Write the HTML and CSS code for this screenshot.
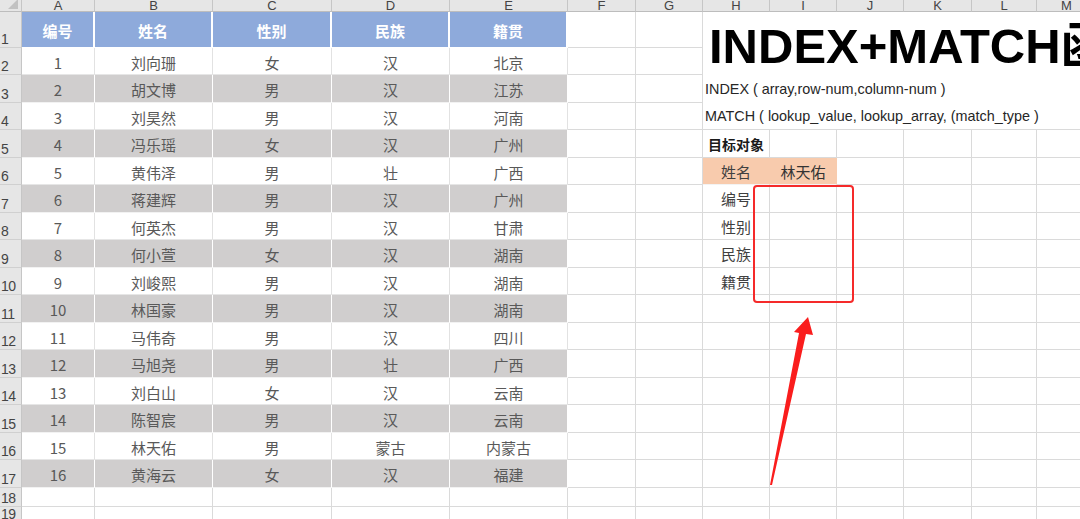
FILE: index.html
```html
<!DOCTYPE html>
<html lang="zh-CN">
<head>
    <meta charset="UTF-8">
    <title>INDEX+MATCH</title>
    <link rel="stylesheet" href="styles.css">
</head>
<body>
<div class="sheet">
    <!-- column headers -->
    <div class="corner"><span class="tri"></span></div>
    <div class="ch">A</div><div class="ch">B</div><div class="ch">C</div><div class="ch">D</div><div class="ch">E</div><div class="ch">F</div><div class="ch">G</div>
    <div class="ch">H</div><div class="ch">I</div><div class="ch">J</div><div class="ch">K</div><div class="ch">L</div><div class="ch">M</div>

    <!-- row 1 -->
    <div class="rn">1</div>
    <div class="hd">编号</div><div class="hd">姓名</div><div class="hd">性别</div><div class="hd">民族</div><div class="hd">籍贯</div>
    <div class="c"></div><div class="c"></div>
    <div class="title">INDEX+MATCH函数</div>

    <!-- row 2 -->
    <div class="rn">2</div>
    <div class="d">1</div><div class="d">刘向珊</div><div class="d">女</div><div class="d">汉</div><div class="d">北京</div>
    <div class="c"></div><div class="c"></div>

    <!-- row 3 -->
    <div class="rn">3</div>
    <div class="d g">2</div><div class="d g">胡文博</div><div class="d g">男</div><div class="d g">汉</div><div class="d g">江苏</div>
    <div class="c"></div><div class="c"></div>
    <div class="fx">INDEX ( array,row-num,column-num )</div>

    <!-- row 4 -->
    <div class="rn">4</div>
    <div class="d">3</div><div class="d">刘昊然</div><div class="d">男</div><div class="d">汉</div><div class="d">河南</div>
    <div class="c"></div><div class="c"></div>
    <div class="fx last">MATCH ( lookup_value, lookup_array, (match_type )</div>

    <!-- row 5 -->
    <div class="rn">5</div>
    <div class="d g">4</div><div class="d g">冯乐瑶</div><div class="d g">女</div><div class="d g">汉</div><div class="d g">广州</div>
    <div class="c"></div><div class="c"></div>
    <div class="c target">目标对象</div><div class="c"></div><div class="c"></div><div class="c"></div><div class="c"></div><div class="c"></div>

    <!-- row 6 -->
    <div class="rn">6</div>
    <div class="d">5</div><div class="d">黄伟泽</div><div class="d">男</div><div class="d">壮</div><div class="d">广西</div>
    <div class="c"></div><div class="c"></div>
    <div class="c lbl pe">姓名</div><div class="c val pe">林天佑</div><div class="c"></div><div class="c"></div><div class="c"></div><div class="c"></div>

    <!-- row 7 -->
    <div class="rn">7</div>
    <div class="d g">6</div><div class="d g">蒋建辉</div><div class="d g">男</div><div class="d g">汉</div><div class="d g">广州</div>
    <div class="c"></div><div class="c"></div>
    <div class="c lbl">编号</div><div class="c"></div><div class="c"></div><div class="c"></div><div class="c"></div><div class="c"></div>

    <!-- row 8 -->
    <div class="rn">8</div>
    <div class="d">7</div><div class="d">何英杰</div><div class="d">男</div><div class="d">汉</div><div class="d">甘肃</div>
    <div class="c"></div><div class="c"></div>
    <div class="c lbl">性别</div><div class="c"></div><div class="c"></div><div class="c"></div><div class="c"></div><div class="c"></div>

    <!-- row 9 -->
    <div class="rn">9</div>
    <div class="d g">8</div><div class="d g">何小萱</div><div class="d g">女</div><div class="d g">汉</div><div class="d g">湖南</div>
    <div class="c"></div><div class="c"></div>
    <div class="c lbl">民族</div><div class="c"></div><div class="c"></div><div class="c"></div><div class="c"></div><div class="c"></div>

    <!-- row 10 -->
    <div class="rn">10</div>
    <div class="d">9</div><div class="d">刘峻熙</div><div class="d">男</div><div class="d">汉</div><div class="d">湖南</div>
    <div class="c"></div><div class="c"></div>
    <div class="c lbl">籍贯</div><div class="c"></div><div class="c"></div><div class="c"></div><div class="c"></div><div class="c"></div>

    <!-- row 11 -->
    <div class="rn">11</div>
    <div class="d g">10</div><div class="d g">林国豪</div><div class="d g">男</div><div class="d g">汉</div><div class="d g">湖南</div>
    <div class="c"></div><div class="c"></div><div class="c"></div><div class="c"></div><div class="c"></div><div class="c"></div><div class="c"></div><div class="c"></div>

    <!-- row 12 -->
    <div class="rn">12</div>
    <div class="d">11</div><div class="d">马伟奇</div><div class="d">男</div><div class="d">汉</div><div class="d">四川</div>
    <div class="c"></div><div class="c"></div><div class="c"></div><div class="c"></div><div class="c"></div><div class="c"></div><div class="c"></div><div class="c"></div>

    <!-- row 13 -->
    <div class="rn">13</div>
    <div class="d g">12</div><div class="d g">马旭尧</div><div class="d g">男</div><div class="d g">壮</div><div class="d g">广西</div>
    <div class="c"></div><div class="c"></div><div class="c"></div><div class="c"></div><div class="c"></div><div class="c"></div><div class="c"></div><div class="c"></div>

    <!-- row 14 -->
    <div class="rn">14</div>
    <div class="d">13</div><div class="d">刘白山</div><div class="d">女</div><div class="d">汉</div><div class="d">云南</div>
    <div class="c"></div><div class="c"></div><div class="c"></div><div class="c"></div><div class="c"></div><div class="c"></div><div class="c"></div><div class="c"></div>

    <!-- row 15 -->
    <div class="rn">15</div>
    <div class="d g">14</div><div class="d g">陈智宸</div><div class="d g">男</div><div class="d g">汉</div><div class="d g">云南</div>
    <div class="c"></div><div class="c"></div><div class="c"></div><div class="c"></div><div class="c"></div><div class="c"></div><div class="c"></div><div class="c"></div>

    <!-- row 16 -->
    <div class="rn">16</div>
    <div class="d">15</div><div class="d">林天佑</div><div class="d">男</div><div class="d">蒙古</div><div class="d">内蒙古</div>
    <div class="c"></div><div class="c"></div><div class="c"></div><div class="c"></div><div class="c"></div><div class="c"></div><div class="c"></div><div class="c"></div>

    <!-- row 17 -->
    <div class="rn">17</div>
    <div class="d g">16</div><div class="d g">黄海云</div><div class="d g">女</div><div class="d g">汉</div><div class="d g">福建</div>
    <div class="c"></div><div class="c"></div><div class="c"></div><div class="c"></div><div class="c"></div><div class="c"></div><div class="c"></div><div class="c"></div>

    <!-- row 18 -->
    <div class="rn">18</div>
    <div class="c"></div><div class="c"></div><div class="c"></div><div class="c"></div><div class="c"></div><div class="c"></div><div class="c"></div>
    <div class="c"></div><div class="c"></div><div class="c"></div><div class="c"></div><div class="c"></div><div class="c"></div>

    <!-- row 19 -->
    <div class="rn">19</div>
    <div class="c"></div><div class="c"></div><div class="c"></div><div class="c"></div><div class="c"></div><div class="c"></div><div class="c"></div>
    <div class="c"></div><div class="c"></div><div class="c"></div><div class="c"></div><div class="c"></div><div class="c"></div>

    <!-- annotations drawn over the sheet -->
    <div class="mark"></div>
    <svg class="arrow" width="60" height="180" viewBox="0 0 60 180">
        <polygon points="10,175 39,23 34,22 48,7 53,25 46,24 12,175" fill="#fa1d1d"/>
    </svg>
</div>
</body>
</html>
```

FILE: styles.css
```css
body {
    margin: 0;
    background-color: #ffffff;
    overflow: hidden;
    width: 1080px;
    height: 519px;
}
.sheet {
    position: relative;
    display: grid;
    grid-template-columns: 22px 73px 118px 119px 118px 118px 68px 67px 67px 67px 67px 68px 65px 60px;
    grid-template-rows: 12px 36px repeat(8, 27px 28px) 19px 16px;
    grid-auto-flow: row;
    width: 1097px;
    font-family: "Noto Sans CJK SC", sans-serif;
}
.sheet > div {
    box-sizing: border-box;
    min-width: 0;
}
.corner {
    background-color: #e6e6e6;
    border-right: 1px solid #c6c6c6;
    border-bottom: 1px solid #bdbdbd;
    display: flex;
    justify-content: flex-end;
    align-items: flex-end;
    padding: 0 3px 2px 0;
}
.tri {
    width: 0;
    height: 0;
    border-left: 10px solid transparent;
    border-bottom: 10px solid #c2c2c2;
}
.ch {
    background-color: #e6e6e6;
    border-right: 1px solid #c6c6c6;
    border-bottom: 1px solid #bdbdbd;
    color: #444444;
    font-family: "Liberation Sans", sans-serif;
    font-size: 13px;
    line-height: 11px;
    display: flex;
    justify-content: center;
    align-items: flex-end;
}
.rn {
    background-color: #e6e6e6;
    border-right: 1px solid #c6c6c6;
    border-bottom: 1px solid #d0d0d0;
    color: #444444;
    font-family: "Liberation Sans", sans-serif;
    font-size: 14px;
    letter-spacing: -0.6px;
    display: flex;
    align-items: flex-end;
    padding: 0 0 1px 1px;
    line-height: 14px;
}
.c {
    border-right: 1px solid #dadada;
    border-bottom: 1px solid #dadada;
    display: flex;
    align-items: center;
    justify-content: center;
    font-size: 15px;
    color: #404040;
    white-space: nowrap;
}
.hd {
    background-color: #8eaadb;
    border-right: 2px solid #ffffff;
    border-bottom: 1px solid #ffffff;
    color: #ffffff;
    font-size: 15px;
    font-weight: bold;
    display: flex;
    align-items: center;
    justify-content: center;
    padding-top: 1px;
}
.d {
    border-right: 1px solid #e2e2e2;
    border-bottom: 1px solid #e6e6e6;
    color: #595959;
    font-size: 15px;
    display: flex;
    align-items: center;
    justify-content: center;
    padding-top: 2px;
}
.d.g {
    background-color: #d0cece;
    border-right: 1px solid #ffffff;
    border-bottom: 1px solid #f2f2f2;
}
.title {
    grid-column: span 6;
    grid-row: span 2;
    font-family: "Liberation Sans", "Noto Sans CJK SC", sans-serif;
    font-size: 49px;
    font-weight: bold;
    line-height: 49px;
    color: #000000;
    white-space: nowrap;
    padding: 10px 0 0 6px;
}
.fx {
    grid-column: span 6;
    display: flex;
    align-items: center;
    padding-left: 2px;
    font-family: "Liberation Sans", "Noto Sans CJK SC", sans-serif;
    font-size: 14.4px;
    color: #262626;
    white-space: nowrap;
}
.fx.last {
    border-bottom: 1px solid #dadada;
}
.target {
    justify-content: flex-start;
    padding-left: 5px;
    font-size: 14px;
    font-weight: bold;
    color: #1a1a1a;
}
.pe {
    background-color: #f8cbad;
    border-right-color: #f8cbad;
    border-bottom-color: #f3f3f3;
}
.val {
    color: #333333;
}
.mark {
    position: absolute;
    left: 753px;
    top: 185px;
    width: 101px;
    height: 118px;
    box-sizing: border-box;
    border: 2.5px solid #f52a2a;
    border-radius: 4px;
}
.arrow {
    position: absolute;
    left: 760px;
    top: 310px;
    pointer-events: none;
}
```
